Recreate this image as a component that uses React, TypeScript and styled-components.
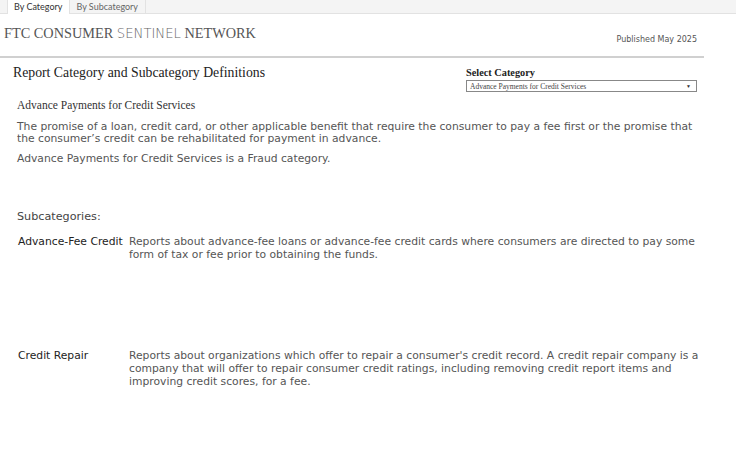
import React from "react";
import styled, { createGlobalStyle } from "styled-components";

const Global = createGlobalStyle`
  html, body { margin: 0; padding: 0; background: #fff; }
  body { font-family: "DejaVu Sans", sans-serif; }
`;

const TabBar = styled.div`
  display: flex;
  height: 14px;
  background: #f4f4f4;
  border-bottom: 1px solid #e2e2e2;
  padding-left: 7px;
  box-sizing: border-box;
`;

const Tab = styled.div<{ $active?: boolean }>`
  font-family: "Lato", "Liberation Sans", sans-serif;
  font-size: 9px;
  line-height: 13px;
  padding: 0 7px 0 6px;
  color: ${(p) => (p.$active ? "#333" : "#666")};
  background: ${(p) => (p.$active ? "#fff" : "transparent")};
  border-left: 1px solid #e2e2e2;
  border-right: 1px solid #e2e2e2;
  height: 14px;
  box-sizing: border-box;
  margin-right: -1px;
`;

const Header = styled.div`
  width: 704px;
  display: flex;
  justify-content: space-between;
  align-items: flex-start;
  padding: 11px 7px 0 4px;
  height: 44px;
  box-sizing: border-box;
  border-bottom: 2px solid #d0d0d0;
`;

const Title = styled.div`
  font-family: "Liberation Serif", serif;
  font-size: 14.3px;
  color: #555;
`;

const Light = styled.span`
  font-family: "DejaVu Sans", sans-serif;
  font-weight: 200;
  font-size: 13.2px;
  color: #666;
`;

const Published = styled.div`
  font-family: "DejaVu Sans", sans-serif;
  font-size: 8px;
  color: #555;
  margin-top: 10px;
`;

const TopRow = styled.div`
  width: 704px;
  box-sizing: border-box;
  display: flex;
  justify-content: space-between;
  align-items: flex-start;
  padding: 6px 7px 0 13px;
`;

const SectionTitle = styled.div`
  font-family: "Liberation Serif", serif;
  font-size: 13.75px;
  color: #222;
  margin-top: 1px;
`;

const SelectBox = styled.div`
  width: 231px;
  display: flex;
  flex-direction: column;
  margin-top: 3px;
`;

const SelectLabel = styled.div`
  font-family: "Liberation Serif", serif;
  font-weight: bold;
  font-size: 10.3px;
  color: #222;
  line-height: 11px;
`;

const Dropdown = styled.div`
  display: flex;
  justify-content: space-between;
  align-items: center;
  height: 12px;
  margin-top: 2px;
  box-sizing: border-box;
  border: 1px solid #888;
  padding: 0 5px 0 3px;
  font-family: "Liberation Serif", serif;
  font-size: 7.5px;
  color: #444;
`;

const Arrow = styled.span`
  font-size: 5px;
  color: #333;
`;

const Body = styled.div`
  padding: 0 16px 0 17px;
`;

const CatName = styled.div`
  font-family: "Liberation Serif", serif;
  font-size: 11.5px;
  color: #333;
  margin-top: 7px;
`;

const Para = styled.p<{ $top?: number }>`
  font-family: "DejaVu Sans", sans-serif;
  font-size: 10.75px;
  line-height: 12px;
  color: #555;
  width: 690px;
  margin: ${(p) => p.$top ?? 0}px 0 0 0;
`;

const SubHeading = styled.div`
  font-family: "DejaVu Sans", sans-serif;
  font-size: 11.2px;
  color: #444;
  margin-top: 45px;
`;

const SubRow = styled.div<{ $top: number }>`
  display: grid;
  grid-template-columns: 111px 1fr;
  margin-top: ${(p) => p.$top}px;
  margin-left: 1px;
`;

const SubName = styled.div`
  font-family: "DejaVu Sans", sans-serif;
  font-size: 10.75px;
  line-height: 13px;
  color: #222;
`;

const SubDesc = styled.div`
  font-family: "DejaVu Sans", sans-serif;
  font-size: 10.75px;
  line-height: 13px;
  color: #555;
`;

export default function App() {
  return (
    <>
      <Global />
      <TabBar>
        <Tab $active>By Category</Tab>
        <Tab>By Subcategory</Tab>
      </TabBar>
      <Header>
        <Title>
          FTC CONSUMER <Light>SENTINEL</Light> NETWORK
        </Title>
        <Published>Published May 2025</Published>
      </Header>
      <TopRow>
        <SectionTitle>Report Category and Subcategory Definitions</SectionTitle>
        <SelectBox>
          <SelectLabel>Select Category</SelectLabel>
          <Dropdown>
            <span>Advance Payments for Credit Services</span>
            <Arrow>▼</Arrow>
          </Dropdown>
        </SelectBox>
      </TopRow>
      <Body>
        <CatName>Advance Payments for Credit Services</CatName>
        <Para $top={10}>
          The promise of a loan, credit card, or other applicable benefit that require the consumer to pay a fee first or the promise that
          the consumer’s credit can be rehabilitated for payment in advance.
        </Para>
        <Para $top={8}>Advance Payments for Credit Services is a Fraud category.</Para>
        <SubHeading>Subcategories:</SubHeading>
        <SubRow $top={12}>
          <SubName>Advance-Fee Credit</SubName>
          <SubDesc>
            Reports about advance-fee loans or advance-fee credit cards where consumers are directed to pay some form of tax or fee prior to obtaining the funds.
          </SubDesc>
        </SubRow>
        <SubRow $top={88}>
          <SubName>Credit Repair</SubName>
          <SubDesc>
            Reports about organizations which offer to repair a consumer's credit record. A credit repair company is a company that will offer to repair consumer credit ratings, including removing credit report items and improving credit scores, for a fee.
          </SubDesc>
        </SubRow>
      </Body>
    </>
  );
}
